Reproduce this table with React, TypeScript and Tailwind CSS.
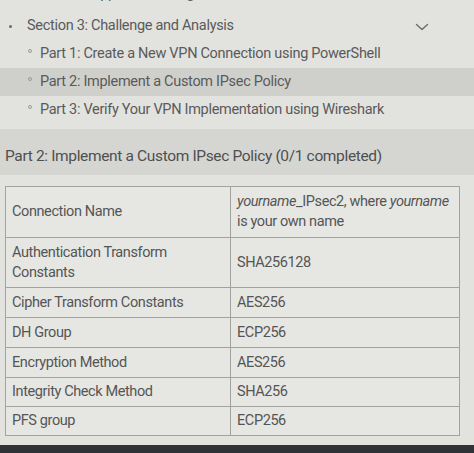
const rows: { label: string[]; value: React.ReactNode; h: string }[] = [
  {
    label: ['Connection Name'],
    value: (
      <>
        <span className="whitespace-nowrap">
          <i>yourname</i>_IPsec2, where <i>yourname</i>
        </span>
        <br />
        is your own name
      </>
    ),
    h: 'h-[50px]',
  },
  { label: ['Authentication Transform', 'Constants'], value: 'SHA256128', h: 'h-[50px]' },
  { label: ['Cipher Transform Constants'], value: 'AES256', h: 'h-[30px]' },
  { label: ['DH Group'], value: 'ECP256', h: 'h-[30px]' },
  { label: ['Encryption Method'], value: 'AES256', h: 'h-[30px]' },
  { label: ['Integrity Check Method'], value: 'SHA256', h: 'h-[29px]' },
  { label: ['PFS group'], value: 'ECP256', h: 'h-[29px]' },
];

function Chevron() {
  return (
    <svg width="14" height="10" viewBox="0 0 14 10" fill="none" className="text-[#6b6b6b]">
      <path d="M1.5 2.5 L7 7.5 L12.5 2.5" stroke="currentColor" strokeWidth="1.4" strokeLinecap="round" strokeLinejoin="round" />
    </svg>
  );
}

function SubItem({ text, active }: { text: string; active?: boolean }) {
  return (
    <div className={`flex h-[28px] items-center pl-[28px] ${active ? 'bg-[#cfd0cc]' : ''}`}>
      <span className="mr-[8px] -mt-[6px] h-[4px] w-[4px] rounded-full border border-[#9a9a9a]" />
      <span className="text-[14.5px] tracking-[-0.3px] text-[#5a5a5a]">{text}</span>
    </div>
  );
}

export default function App() {
  return (
    <div
      className="flex h-[453px] w-[474px] flex-col overflow-hidden bg-[#e2e3df]"
      style={{ fontFamily: 'Roboto, "Liberation Sans", sans-serif' }}
    >
      <div className="-mt-[16px] flex h-[28px] items-center pb-[9px] pl-[27px] pr-[44px] text-[14.5px] tracking-[-0.3px] text-[#5a5a5a]">
        <span>Section 2: Applied Learning</span>
        <span className="ml-auto">
          <Chevron />
        </span>
      </div>
      <div className="flex h-[28px] items-center pl-[9px] pr-[45px] text-[14.5px] tracking-[-0.3px] text-[#5a5a5a]">
        <span className="mr-[15px] h-[3px] w-[3px] rounded-full bg-[#6a6a6a]" />
        <span>Section 3: Challenge and Analysis</span>
        <span className="ml-auto mt-[2px]">
          <Chevron />
        </span>
      </div>
      <SubItem text="Part 1: Create a New VPN Connection using PowerShell" />
      <SubItem text="Part 2: Implement a Custom IPsec Policy" active />
      <SubItem text="Part 3: Verify Your VPN Implementation using Wireshark" />

      <div className="mt-[5px] flex h-[46px] items-end bg-[#d5d6d2] pb-[7px] pl-[5px]">
        <h2 className="text-[15.5px] tracking-[-0.35px] text-[#4f4f4f]">Part 2: Implement a Custom IPsec Policy (0/1 completed)</h2>
      </div>

      <div className="mt-[11px] ml-[5px] w-[455px] border border-[#a2a2a0] bg-[#e6e7e3]">
        {rows.map((r, i) => (
          <div key={i} className={`flex ${r.h} ${i > 0 ? 'border-t border-[#a2a2a0]' : ''}`}>
            <div className="flex w-[225px] flex-col justify-center border-r border-[#a2a2a0] pl-[6px] text-[14.5px] leading-[20px] tracking-[-0.4px] text-[#555555]">
              {r.label.map((l) => (
                <span key={l}>{l}</span>
              ))}
            </div>
            <div className="flex flex-1 items-center pl-[6px] text-[14.5px] leading-[20px] tracking-[-0.4px] text-[#555555]">
              <span>{r.value}</span>
            </div>
          </div>
        ))}
      </div>

      <div className="mt-auto h-[8px] bg-[#2f3236]" />
    </div>
  );
}
